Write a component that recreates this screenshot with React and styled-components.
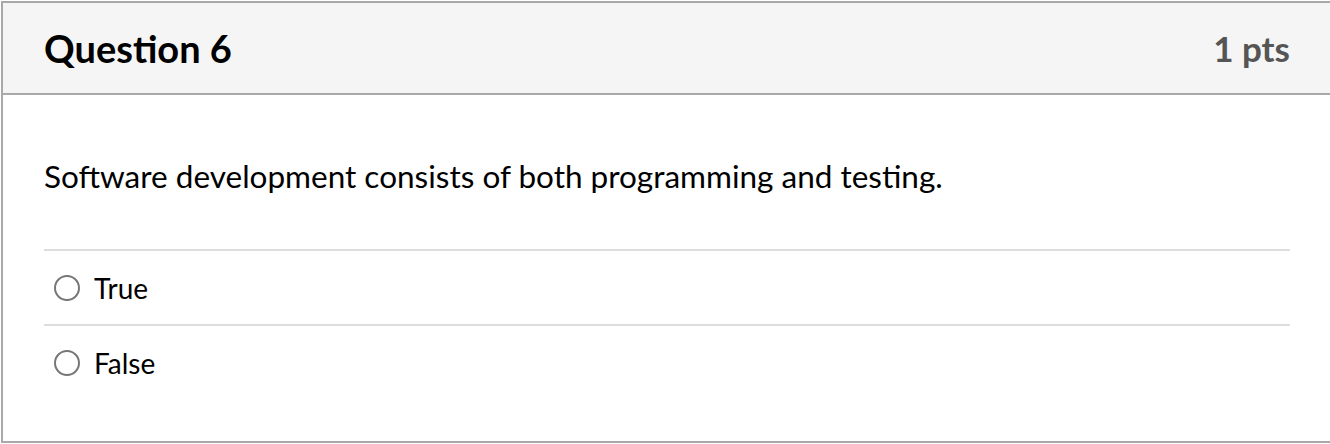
import React from "react";
import styled, { createGlobalStyle } from "styled-components";

const Global = createGlobalStyle`
  html, body { margin: 0; padding: 0; background: #fff; }
  body { font-family: Lato, "Noto Sans", sans-serif; color: #000; }
`;

const Page = styled.div`
  padding: 1px 0 0 1px;
  width: 1340px;
`;

const Card = styled.div`
  width: 1332px;
  border: 2px solid #a9a9a9;
  box-sizing: border-box;
  background: #fff;
`;

const Header = styled.div`
  height: 92px;
  box-sizing: border-box;
  background: #f5f5f5;
  border-bottom: 2px solid #a9a9a9;
  display: flex;
  align-items: center;
  justify-content: space-between;
  padding: 0 41px;
`;

const Title = styled.h2`
  margin: 0;
  font-size: 38px;
  font-weight: 700;
  color: #000;
`;

const Points = styled.span`
  font-size: 35px;
  font-weight: 700;
  color: #555;
`;

const Body = styled.div`
  padding: 61px 41px 42px;
`;

const Prompt = styled.p`
  margin: 0 0 53px;
  font-size: 31.5px;
  line-height: 40px;
`;

const Answers = styled.div`
  display: flex;
  flex-direction: column;
`;

const Answer = styled.label`
  display: flex;
  align-items: center;
  gap: 14px;
  height: 75px;
  box-sizing: border-box;
  border-top: 2px solid #ddd;
  padding-left: 10px;
  font-size: 28px;
`;

const Radio = styled.span`
  width: 22px;
  height: 22px;
  border: 2px solid #777;
  border-radius: 50%;
  flex: none;
`;

export default function App() {
  const answers = ["True", "False"];
  return (
    <>
      <Global />
      <Page>
        <Card>
          <Header>
            <Title>Question 6</Title>
            <Points>1 pts</Points>
          </Header>
          <Body>
            <Prompt>Software development consists of both programming and testing.</Prompt>
            <Answers>
              {answers.map((a) => (
                <Answer key={a}>
                  <Radio />
                  {a}
                </Answer>
              ))}
            </Answers>
          </Body>
        </Card>
      </Page>
    </>
  );
}
